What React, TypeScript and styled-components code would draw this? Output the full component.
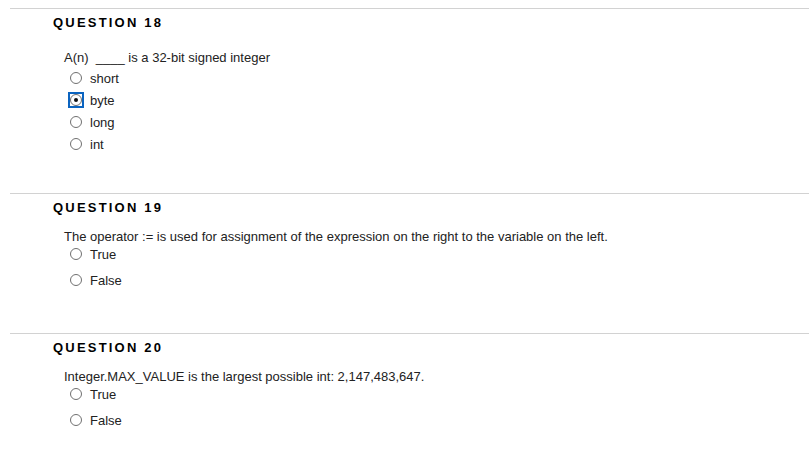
import styled, { createGlobalStyle } from "styled-components"

const Global = createGlobalStyle`
body{
    margin:0;
    background:#fff;
    font-family:"Liberation Sans", Arial, sans-serif;
}
`

type Q = {
    num: number
    text: string
    options: string[]
    checked?: number
    textGap: number
    optTop: number
    optGap: number
    bottom: number
}

const questions: Q[] = [
    {
        num: 18,
        text: "A(n)  ____ is a 32-bit signed integer",
        options: ["short", "byte", "long", "int"],
        checked: 1,
        textGap: 19,
        optTop: 3,
        optGap: 4,
        bottom: 40,
    },
    {
        num: 19,
        text: "The operator := is used for assignment of the expression on the right to the variable on the left.",
        options: ["True", "False"],
        textGap: 13,
        optTop: 0,
        optGap: 8,
        bottom: 44,
    },
    {
        num: 20,
        text: "Integer.MAX_VALUE is the largest possible int: 2,147,483,647.",
        options: ["True", "False"],
        textGap: 13,
        optTop: 0,
        optGap: 8,
        bottom: 44,
    },
]

const App = () => {
    return (
        <Page>
            <Global />
            {questions.map((q) => (
                <Section key={q.num} $bottom={q.bottom}>
                    <Title>QUESTION {q.num}</Title>
                    <Body $gap={q.textGap}>
                        <Prompt>{q.text}</Prompt>
                        <Options $top={q.optTop} $gap={q.optGap}>
                            {q.options.map((o, i) => (
                                <Row key={o}>
                                    <Focus $on={q.checked === i}>
                                        <Radio $checked={q.checked === i} />
                                    </Focus>
                                    <Label>{o}</Label>
                                </Row>
                            ))}
                        </Options>
                    </Body>
                </Section>
            ))}
        </Page>
    )
}
export default App

const Page = styled.div`
padding:8px 0 0 10px;
`

const Section = styled.section<{ $bottom: number }>`
border-top:1px solid #d2d2d2;
padding:6px 0 ${(p) => p.$bottom}px 43px;
`

const Title = styled.h2`
margin:0;
font-size:13px;
line-height:16px;
font-weight:bold;
letter-spacing:2.2px;
color:#000;
`

const Body = styled.div<{ $gap: number }>`
margin-top:${(p) => p.$gap}px;
padding-left:11px;
`

const Prompt = styled.div`
font-size:13px;
line-height:16px;
color:#222;
white-space:pre;
`

const Options = styled.div<{ $top: number; $gap: number }>`
display:flex;
flex-direction:column;
margin-top:${(p) => p.$top}px;
gap:${(p) => p.$gap}px;
padding-left:4px;
`

const Row = styled.div`
display:flex;
align-items:center;
height:18px;
`

const Focus = styled.span<{ $on: boolean }>`
width:16px;
height:16px;
box-sizing:border-box;
display:flex;
align-items:center;
justify-content:center;
border:2px solid ${(p) => (p.$on ? "#0b64c0" : "transparent")};
`

const Radio = styled.span<{ $checked: boolean }>`
width:12px;
height:12px;
box-sizing:border-box;
border:1px solid #707070;
border-radius:50%;
background:#fff;
display:flex;
align-items:center;
justify-content:center;
&::after{
    content:"";
    display:${(p) => (p.$checked ? "block" : "none")};
    width:4px;
    height:4px;
    border-radius:50%;
    background:#111;
}
`

const Label = styled.span`
margin-left:6px;
font-size:13px;
color:#222;
`
